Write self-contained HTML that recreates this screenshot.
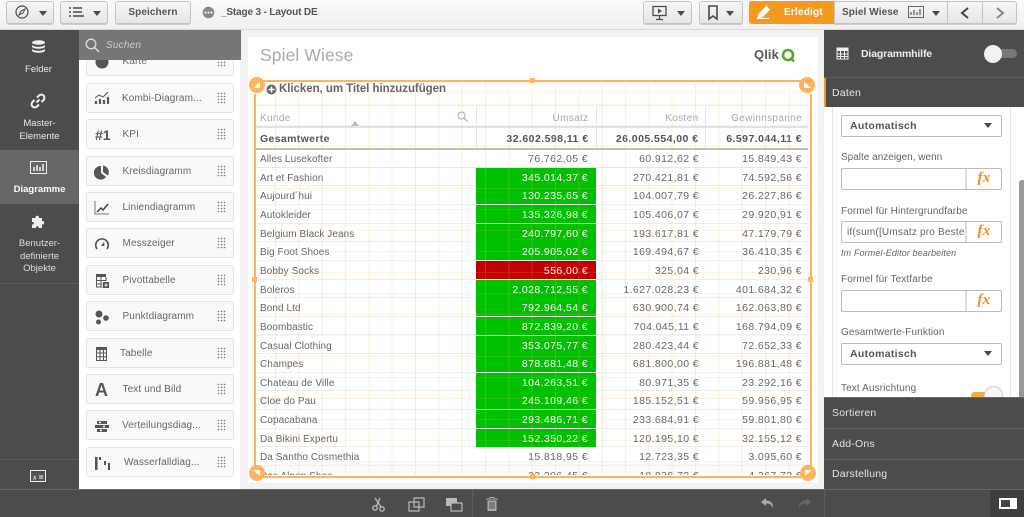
<!DOCTYPE html>
<html lang="de"><head><meta charset="utf-8"><title>Spiel Wiese</title>
<style>
html,body{margin:0;padding:0}
body{width:1024px;height:517px;position:relative;overflow:hidden;background:#f2f2f2;font-family:"Liberation Sans",sans-serif;color:#595959;font-size:10px}
div,span,u{box-sizing:border-box}
.a{position:absolute}
.btn{position:absolute;top:1px;height:23px;background:linear-gradient(#f6f6f6,#e6e6e6);border:1px solid #c4c4c4;border-radius:3px;box-shadow:0 1px 0 #ccc}
.tri{position:absolute;width:0;height:0;border-left:4px solid transparent;border-right:4px solid transparent;border-top:5px solid #4a4a4a}
.side{position:absolute;left:0;width:79px;text-align:center;color:#e8e8e8;font-size:9.5px;line-height:12.5px}
.card{position:absolute;left:86px;width:148px;height:30px;background:#f9f9f9;border:1px solid #e3e3e3;border-radius:3px;color:#666;font-size:10px;line-height:30px;letter-spacing:.12px;white-space:nowrap}
.card svg{position:absolute;left:7px;top:5px}
.card i{position:absolute;left:130px;top:8px;width:9px;height:12px;background:radial-gradient(circle,#808080 .65px,transparent .95px) 0 0/3px 3px}
.card span{position:absolute;top:0}
.hd{position:absolute;top:113px;font-size:10px;color:#a8a8a8;letter-spacing:.35px;text-align:right;white-space:nowrap}
.tot{position:absolute;top:133px;font-size:10.5px;font-weight:bold;color:#555;letter-spacing:.45px;text-align:right;white-space:nowrap}
.r{position:absolute;left:255px;width:553px;height:18.65px;border-bottom:1px solid #eee;font-size:10.5px;line-height:20.5px;color:#666;white-space:nowrap}
.r b{font-weight:normal;position:absolute;left:5px;letter-spacing:.08px;font-size:10px;line-height:21.5px}
.r u,.r s,.r em{text-decoration:none;font-style:normal;position:absolute;text-align:right;letter-spacing:.4px}
.r u{left:221px;width:120px;padding-right:8px;height:18px}
.r s{right:109px}
.r em{right:6px}
.g u{background:#00c000;color:#fff}
.rd u{background:#c00000;color:#fff}
.lb{position:absolute;left:841px;font-size:10px;color:#666;letter-spacing:.12px;white-space:nowrap}
.sel{position:absolute;left:841px;width:161px;height:22px;background:#fff;border:1px solid #bbb;border-radius:2px;font-size:10.5px;font-weight:bold;color:#555;line-height:20px;padding-left:8px;letter-spacing:.3px}
.inp{position:absolute;left:841px;width:161px;height:22px;background:#fff;border:1px solid #bbb;border-radius:2px;font-size:10px;color:#666;line-height:21px;padding-left:5px;letter-spacing:.2px;white-space:nowrap;overflow:hidden}
.inp i{position:absolute;right:0;top:0;width:34px;height:20px;background:#fff;border-left:2px solid #ddd;color:#f28c1e;font:italic bold 15px "Liberation Serif",serif;text-align:center;line-height:19px}
.acc{position:absolute;left:824px;width:200px;background:#4c4c4c;border-top:1px solid #666;color:#e4e4e4;font-size:10.5px;padding-left:8px;letter-spacing:.2px}
.hnd{position:absolute;width:16px;height:16px;border-radius:50%;background:#ffb35c}
.sq{position:absolute;width:5px;height:5px;background:#ffb35c}
</style></head><body>

<!-- top bar -->
<div class="a" style="left:0;top:0;width:1024px;height:30px;background:linear-gradient(#fafafa,#f0f0f0);border-bottom:1px solid #d8d8d8"></div>
<div class="btn" style="left:6px;width:48px"><svg class="a" style="left:7px;top:2px" width="16" height="16" viewBox="0 0 16 16"><circle cx="8" cy="8" r="6" fill="none" stroke="#4a4a4a" stroke-width="1.2"/><path d="M11 5 9 9 5 11 7 7z" fill="none" stroke="#4a4a4a"/></svg><div class="tri" style="left:32px;top:9px"></div></div>
<div class="btn" style="left:60px;width:48px"><svg class="a" style="left:8px;top:4px" width="15" height="12" viewBox="0 0 15 12"><path d="M0 2h2M4 2h9M0 6h2M4 6h9M0 10h2M4 10h11" stroke="#4a4a4a" stroke-width="1.5"/></svg><div class="tri" style="left:32px;top:9px"></div></div>
<div class="btn" style="left:115px;width:76px;text-align:center;font-weight:bold;font-size:10px;line-height:22px;color:#555;letter-spacing:.1px">Speichern</div>
<svg class="a" style="left:202px;top:6px" width="13" height="13"><circle cx="6.5" cy="6.5" r="5.8" fill="#888"/><circle cx="3.5" cy="6.5" r="1" fill="#fff"/><circle cx="6.5" cy="6.5" r="1" fill="#fff"/><circle cx="9.5" cy="6.5" r="1" fill="#fff"/></svg>
<div class="a" style="left:221px;top:7px;font-size:10px;font-weight:bold;color:#555;letter-spacing:-.15px;white-space:nowrap">_Stage 3 - Layout DE</div>

<div class="btn" style="left:643px;width:49px"><svg class="a" style="left:8px;top:3px" width="16" height="16" viewBox="0 0 16 16"><path d="M1 1.5h13v9H1zM7.500 11v3M4 14.500h7" fill="none" stroke="#4a4a4a" stroke-width="1.3"/><path d="M6 3.500 10 6 6 8.500z" fill="#4a4a4a"/></svg><div class="tri" style="left:33px;top:9px"></div></div>
<div class="btn" style="left:699px;width:44px"><svg class="a" style="left:7px;top:3px" width="12" height="16" viewBox="0 0 12 16"><path d="M2 1h8v13L6 11l-4 3z" fill="none" stroke="#4a4a4a" stroke-width="1.6"/></svg><div class="tri" style="left:26px;top:9px"></div></div>
<div class="a" style="left:749px;top:1px;width:85px;height:23px;background:#f7981f;border-radius:3px 0 0 3px;color:#fff;font-weight:bold;font-size:10px;line-height:23px;padding-left:35px;letter-spacing:.2px">Erledigt
<svg class="a" style="left:8px;top:3px" width="16" height="15" viewBox="0 0 16 15"><path d="M2 10 10 2l3 3-8 8-4 1zM0 14.500h12" fill="#fff" stroke="#fff"/><path d="M10 2l3 3" stroke="#f7981f"/></svg></div>
<div class="btn" style="left:834px;width:114px;border-radius:0;font-weight:bold;font-size:10px;line-height:22px;padding-left:7px;color:#555;letter-spacing:.1px">Spiel Wiese<svg class="a" style="left:73px;top:4px" width="16" height="13" viewBox="0 0 16 13"><path d="M.5 .5h15v11H.5z" fill="none" stroke="#666"/><path d="M3 9V6M6 9V4M9 9V6M12 9V3" stroke="#666" stroke-width="1.300"/></svg><div class="tri" style="left:97px;top:9px"></div></div>
<div class="btn" style="left:947px;width:36px;border-radius:0"><svg class="a" style="left:12px;top:5px" width="10" height="12"><path d="M8 1 2 6l6 5" fill="none" stroke="#444" stroke-width="2"/></svg></div>
<div class="btn" style="left:982px;width:35px;border-radius:0 3px 3px 0"><svg class="a" style="left:12px;top:5px" width="10" height="12"><path d="M2 1l6 5-6 5" fill="none" stroke="#888" stroke-width="2"/></svg></div>

<!-- left sidebar -->
<div class="a" style="left:0;top:30px;width:79px;height:459px;background:#4c4c4c"></div>
<div class="a" style="left:0;top:150px;width:79px;height:54px;background:#666"></div>
<div class="a" style="left:0;top:283px;width:79px;height:1px;background:#5c5c5c"></div>
<div class="a" style="left:0;top:459px;width:79px;height:1px;background:#5c5c5c"></div>
<svg class="a" style="left:31px;top:40px" width="15" height="14" viewBox="0 0 15 14"><ellipse cx="7.500" cy="2.500" rx="6.500" ry="2.300" fill="#eee"/><path d="M1 4.500c0 3 13 3 13 0v2c0 3-13 3-13 0zM1 8.500c0 3 13 3 13 0v2c0 3-13 3-13 0z" fill="#eee"/></svg>
<div class="side" style="top:64px;left:-1px">Felder</div>
<svg class="a" style="left:30px;top:93px" width="16" height="16" viewBox="0 0 16 16"><path d="M6.500 9.500l3-3M7 4.500l2-2a2.500 2.500 0 0 1 4.500 4.500l-2 2M9 11.500l-2 2A2.500 2.500 0 0 1 2.500 9l2-2" fill="none" stroke="#eee" stroke-width="2"/></svg>
<div class="side" style="top:118px">Master-<br>Elemente</div>
<svg class="a" style="left:30px;top:161px" width="17" height="13" viewBox="0 0 17 13"><path d="M.5 .5h16v12H.5z" fill="none" stroke="#eee"/><path d="M4 10V6M7 10V4M10 10V6M13 10V3" stroke="#eee" stroke-width="1.600"/></svg>
<div class="side" style="top:184px;font-weight:bold;color:#fff">Diagramme</div>
<svg class="a" style="left:31px;top:214px" width="15" height="15" viewBox="0 0 15 15"><path d="M1 4h3.500c-.5-3 4-3 3.500 0h3v3c3-.5 3 4 0 3.500V14H7.500c.5-2.500-3-2.500-2.500 0H1v-3.500c2.500.5 2.500-3 0-2.500z" fill="#eee"/></svg>
<div class="side" style="top:238px;color:#ddd">Benutzer-<br>definierte<br>Objekte</div>
<svg class="a" style="left:30px;top:470px" width="16" height="12" viewBox="0 0 16 12"><path d="M.5 .5h15v11H.5z" fill="none" stroke="#eee"/><path d="M1 3h14v8H1z" fill="#555"/><text x="3" y="9.500" font-size="7" font-style="italic" font-weight="bold" fill="#eee" font-family="Liberation Serif">x</text><path d="M9 6h4M9 8h4" stroke="#eee"/></svg>

<!-- assets panel -->
<div class="a" style="left:79px;top:30px;width:161px;height:459px;background:#fff"></div>
<div class="card" style="top:46px"><svg width="16" height="20" viewBox="0 0 16 20"><circle cx="8" cy="10" r="6.500" fill="#555"/></svg><span style="left:35.500px">Karte</span><i></i></div>
<div class="card" style="top:82.500px"><svg width="16" height="20" viewBox="0 0 16 20"><path d="M2 15v-3M6 15v-5M10 15v-4M14 15V8" stroke="#555" stroke-width="2.200"/><path d="M1 9l4-3 4 2 5-5" fill="none" stroke="#555"/></svg><span style="left:35px">Kombi-Diagram...</span><i></i></div>
<div class="card" style="top:119px"><span style="left:8px;font-size:14px;font-weight:bold;color:#555;letter-spacing:0">#1</span><span style="left:35.500px">KPI</span><i></i></div>
<div class="card" style="top:155.500px"><svg width="16" height="20" viewBox="0 0 16 20"><path d="M7 4v7l5 4a6.800 6.800 0 1 1-5-11zM9 3.500a6.800 6.800 0 0 1 5 10L9 10z" fill="#555"/></svg><span style="left:35.500px">Kreisdiagramm</span><i></i></div>
<div class="card" style="top:192px"><svg width="16" height="20" viewBox="0 0 16 20"><path d="M1 3v13h14" fill="none" stroke="#777"/><path d="M3 14l4-4 2 2 5-6" fill="none" stroke="#444" stroke-width="1.500"/></svg><span style="left:35.500px">Liniendiagramm</span><i></i></div>
<div class="card" style="top:228px"><svg width="16" height="20" viewBox="0 0 16 20"><path d="M3 15a6.300 6.300 0 1 1 10 0" fill="none" stroke="#555" stroke-width="1.600"/><path d="M7 12l3-4 .5 4z" fill="#555"/></svg><span style="left:35.500px">Messzeiger</span><i></i></div>
<div class="card" style="top:265px"><svg width="16" height="20" viewBox="0 0 16 20"><path d="M2 3h10v3H2z" fill="#555"/><path d="M2.500 6v10h6M7 6v10M2.500 9.500h9.500M2.500 13h6M12 6v4" fill="none" stroke="#555"/><path d="M9 11h6v6H9z" fill="#555"/><path d="M12 12.500v3M10.500 14h3" stroke="#fff"/></svg><span style="left:35.500px">Pivottabelle</span><i></i></div>
<div class="card" style="top:301px"><svg width="16" height="20" viewBox="0 0 16 20"><circle cx="5" cy="7" r="3.500" fill="#555"/><circle cx="12" cy="11" r="2.800" fill="#555"/><circle cx="4.500" cy="15" r="2.500" fill="#555"/></svg><span style="left:35.500px">Punktdiagramm</span><i></i></div>
<div class="card" style="top:337.500px"><svg width="16" height="20" viewBox="0 0 16 20"><path d="M2 3h11v3H2z" fill="#555"/><path d="M2.500 5v11.500h10V5M2.500 9h10M2.500 12.700h10M6 6v10M9.500 6v10" fill="none" stroke="#555"/></svg><span style="left:33px">Tabelle</span><i></i></div>
<div class="card" style="top:374px"><span style="left:8px;font-size:18px;font-weight:bold;color:#555;letter-spacing:0">A</span><span style="left:35.500px">Text und Bild</span><i></i></div>
<div class="card" style="top:410px"><svg width="16" height="20" viewBox="0 0 16 20"><path d="M3 5h10v3H3zM1 9h14v3H1zM3 13h10v3H3z" fill="#555"/><circle cx="6" cy="6.500" r="1" fill="#fff"/><circle cx="10" cy="10.500" r="1" fill="#fff"/><circle cx="7" cy="14.500" r="1" fill="#fff"/></svg><span style="left:35px">Verteilungsdiag...</span><i></i></div>
<div class="card" style="top:446.500px"><svg width="18" height="20" viewBox="0 0 18 20"><path d="M1 4h2.500v13H1zM5 4h2v3H5zM10 8h2v4h-2zM14 10h2v7h-2z" fill="#555"/></svg><span style="left:37px">Wasserfalldiag...</span><i></i></div>
<div class="a" style="left:79px;top:30px;width:162px;height:30px;background:#767676"></div>
<svg class="a" style="left:85px;top:38px" width="15" height="15" viewBox="0 0 15 15"><circle cx="6" cy="6" r="4.800" fill="none" stroke="#ddd" stroke-width="1.300"/><path d="M9.500 9.500 14 14" stroke="#ddd" stroke-width="1.500"/></svg>
<div class="a" style="left:106px;top:40px;font-size:10px;font-style:italic;color:#ccc;letter-spacing:.2px">Suchen</div>

<!-- sheet -->
<div class="a" style="left:247.500px;top:36.500px;width:570px;height:446.500px;background:#fff"></div>
<div class="a" style="left:260px;top:45px;font-size:17.500px;color:#aaa;letter-spacing:.1px;white-space:nowrap">Spiel Wiese</div>
<div class="a" style="left:754px;top:47px;font-size:13px;font-weight:bold;color:#595959;letter-spacing:.1px">Qlik</div>
<svg class="a" style="left:781px;top:48px" width="15" height="15" viewBox="0 0 15 15"><circle cx="7" cy="7" r="5" fill="none" stroke="#52a62e" stroke-width="2.600"/><path d="M9.500 9.500l3.500 4" stroke="#52a62e" stroke-width="2.600"/></svg>

<!-- title -->
<svg class="a" style="left:266px;top:84px" width="11" height="11"><circle cx="5.500" cy="5.500" r="5" fill="#666"/><path d="M5.500 2.500v6M2.500 5.500h6" stroke="#fff" stroke-width="1.500"/></svg>
<div class="a" style="left:279px;top:83px;font-size:11.500px;font-weight:bold;color:#666;letter-spacing:-.05px;white-space:nowrap">Klicken, um Titel hinzuzufügen</div>

<!-- table -->
<div class="a" style="left:255px;top:105px;width:553px;height:1px;background:#eee"></div>
<div class="a" style="left:476px;top:105px;width:1px;height:45px;background:#e8e8e8"></div>
<div class="a" style="left:596px;top:105px;width:1px;height:45px;background:#e8e8e8"></div>
<div class="a" style="left:705px;top:105px;width:1px;height:45px;background:#e8e8e8"></div>
<div class="hd" style="left:260px">Kunde</div>
<svg class="a" style="left:457px;top:111px" width="11" height="11" viewBox="0 0 11 11"><circle cx="4.500" cy="4.500" r="3.500" fill="none" stroke="#aaa"/><path d="M7 7l3.500 3.500" stroke="#aaa" stroke-width="1.200"/></svg>
<div class="a" style="left:351px;top:121px;width:0;height:0;border-left:4px solid transparent;border-right:4px solid transparent;border-bottom:5px solid #bbb"></div>
<div class="hd" style="right:435.500px">Umsatz</div>
<div class="hd" style="right:325.500px">Kosten</div>
<div class="hd" style="right:222px">Gewinnspanne</div>
<div class="a" style="left:255px;top:126px;width:553px;height:2px;background:#e2e2e2"></div>
<div class="tot" style="left:260px;letter-spacing:.35px">Gesamtwerte</div>
<div class="tot" style="right:435.500px">32.602.598,11 €</div>
<div class="tot" style="right:325.500px">26.005.554,00 €</div>
<div class="tot" style="right:222px">6.597.044,11 €</div>
<div class="a" style="left:255px;top:148px;width:553px;height:2px;background:#bdbdbd"></div>

<div class="a" style="left:0;top:0;width:1024px;height:475px;overflow:hidden">
<div class="r" style="top:149px"><b>Alles Lusekofter</b><u>76.762,05 €</u><s>60.912,62 €</s><em>15.849,43 €</em></div>
<div class="r g" style="top:167.650px"><b>Art et Fashion</b><u>345.014,37 €</u><s>270.421,81 €</s><em>74.592,56 €</em></div>
<div class="r g" style="top:186.300px"><b>Aujourd´hui</b><u>130.235,65 €</u><s>104.007,79 €</s><em>26.227,86 €</em></div>
<div class="r g" style="top:204.950px"><b>Autokleider</b><u>135.326,98 €</u><s>105.406,07 €</s><em>29.920,91 €</em></div>
<div class="r g" style="top:223.600px"><b>Belgium Black Jeans</b><u>240.797,60 €</u><s>193.617,81 €</s><em>47.179,79 €</em></div>
<div class="r g" style="top:242.250px"><b>Big Foot Shoes</b><u>205.905,02 €</u><s>169.494,67 €</s><em>36.410,35 €</em></div>
<div class="r rd" style="top:260.900px"><b>Bobby Socks</b><u>556,00 €</u><s>325,04 €</s><em>230,96 €</em></div>
<div class="r g" style="top:279.550px"><b>Boleros</b><u>2.028.712,55 €</u><s>1.627.028,23 €</s><em>401.684,32 €</em></div>
<div class="r g" style="top:298.200px"><b>Bond Ltd</b><u>792.964,54 €</u><s>630.900,74 €</s><em>162.063,80 €</em></div>
<div class="r g" style="top:316.850px"><b>Boombastic</b><u>872.839,20 €</u><s>704.045,11 €</s><em>168.794,09 €</em></div>
<div class="r g" style="top:335.500px"><b>Casual Clothing</b><u>353.075,77 €</u><s>280.423,44 €</s><em>72.652,33 €</em></div>
<div class="r g" style="top:354.150px"><b>Champes</b><u>878.681,48 €</u><s>681.800,00 €</s><em>196.881,48 €</em></div>
<div class="r g" style="top:372.800px"><b>Chateau de Ville</b><u>104.263,51 €</u><s>80.971,35 €</s><em>23.292,16 €</em></div>
<div class="r g" style="top:391.450px"><b>Cloe do Pau</b><u>245.109,46 €</u><s>185.152,51 €</s><em>59.956,95 €</em></div>
<div class="r g" style="top:410.100px"><b>Copacabana</b><u>293.486,71 €</u><s>233.684,91 €</s><em>59.801,80 €</em></div>
<div class="r g" style="top:428.750px"><b>Da Bikini Expertu</b><u>152.350,22 €</u><s>120.195,10 €</s><em>32.155,12 €</em></div>
<div class="r" style="top:447.400px"><b>Da Santho Cosmethia</b><u>15.818,95 €</u><s>12.723,35 €</s><em>3.095,60 €</em></div>
<div class="r" style="top:466.050px"><b>Das Alpen Shoe</b><u>23.206,45 €</u><s>18.838,72 €</s><em>4.367,73 €</em></div>
</div>

<!-- grid overlay -->
<div class="a" style="left:254px;top:84px;width:556px;height:391px;pointer-events:none;background-image:repeating-linear-gradient(90deg,transparent 0 21px,rgba(255,179,92,.24) 21px 22px,transparent 22px 23.330px),repeating-linear-gradient(180deg,transparent 0 20px,rgba(255,179,92,.16) 20px 21px,transparent 21px 20.750px)"></div>

<!-- frame -->
<div class="a" style="left:263px;top:79.500px;width:538px;height:2px;background:#ffb35c"></div>
<div class="a" style="left:263px;top:475.500px;width:538px;height:2px;background:#ffb35c"></div>
<div class="a" style="left:253.500px;top:94px;width:2px;height:372px;background:#ffb35c"></div>
<div class="a" style="left:809.500px;top:94px;width:2px;height:372px;background:#ffb35c"></div>
<div class="hnd" style="left:249px;top:76.500px"><svg class="a" style="left:3px;top:4px" width="9" height="8"><path d="M8 1v6H1z" fill="#fff"/></svg></div>
<div class="hnd" style="left:799px;top:76.500px"><svg class="a" style="left:4px;top:4px" width="9" height="8"><path d="M1 1v6h7z" fill="#fff"/></svg></div>
<div class="hnd" style="left:249px;top:465px"><svg class="a" style="left:3px;top:4px" width="9" height="8"><path d="M1 1h7v6z" fill="#fff"/></svg></div>
<div class="hnd" style="left:800px;top:465px"><svg class="a" style="left:4px;top:4px" width="9" height="8"><path d="M1 1h7L1 7z" fill="#fff"/></svg></div>
<div class="sq" style="left:530px;top:78px"></div>
<div class="sq" style="left:530px;top:473.500px"></div>
<div class="sq" style="left:251.500px;top:277px"></div>
<div class="sq" style="left:808px;top:277px"></div>

<!-- right panel -->
<div class="a" style="left:824px;top:30px;width:200px;height:77px;background:#4c4c4c"></div>
<div class="a" style="left:824px;top:77px;width:200px;height:1px;background:#5e5e5e"></div>
<div class="a" style="left:824px;top:78px;width:2px;height:29px;background:#f7981f"></div>
<svg class="a" style="left:836px;top:47px" width="13" height="13" viewBox="0 0 13 13"><path d="M1 1h11v3H1z" fill="#eee"/><path d="M1 1h11v11H1zM1 7h11M1 9.500h11M4.500 4v8M8.500 4v8" fill="none" stroke="#eee"/></svg>
<div class="a" style="left:861px;top:48px;font-size:10.500px;font-weight:bold;color:#eee;letter-spacing:-.15px;white-space:nowrap">Diagrammhilfe</div>
<div class="a" style="left:990px;top:49px;width:27px;height:9px;background:#777;border-radius:5px"></div>
<div class="a" style="left:983.500px;top:45px;width:18px;height:18px;background:#f2f2f2;border-radius:50%"></div>
<div class="a" style="left:832px;top:87px;font-size:10.500px;color:#e8e8e8;letter-spacing:.2px">Daten</div>

<div class="a" style="left:824px;top:107px;width:200px;height:290px;background:#fff"></div>
<div class="a" style="left:832px;top:107px;width:1px;height:290px;background:#e6e6e6"></div>
<div class="a" style="left:1010px;top:107px;width:1px;height:290px;background:#e6e6e6"></div>
<div class="a" style="left:1019px;top:180px;width:5px;height:217px;background:#999;border-radius:3px 0 0 0"></div>

<div class="sel" style="top:115px">Automatisch<div class="tri" style="right:9px;top:7px;left:auto"></div></div>
<div class="lb" style="top:152px;letter-spacing:0">Spalte anzeigen, wenn</div>
<div class="inp" style="top:168px"><i>fx</i></div>
<div class="lb" style="top:206px">Formel für Hintergrundfarbe</div>
<div class="inp" style="top:221px">if(sum([Umsatz pro Beste<i>fx</i></div>
<div class="lb" style="top:248px;font-size:9px;font-style:italic">Im Formel-Editor bearbeiten</div>
<div class="lb" style="top:274px">Formel für Textfarbe</div>
<div class="inp" style="top:290px"><i>fx</i></div>
<div class="lb" style="top:327px">Gesamtwerte-Funktion</div>
<div class="sel" style="top:343px">Automatisch<div class="tri" style="right:9px;top:7px;left:auto"></div></div>
<div class="lb" style="top:383px">Text Ausrichtung</div>
<div class="a" style="left:971px;top:392px;width:30px;height:8px;background:#f7a83e;border-radius:4px 0 0 0"></div>
<div class="a" style="left:984px;top:386px;width:19px;height:19px;background:#f6f6f6;border:1px solid #ccc;border-radius:50%"></div>

<div class="acc" style="top:397px;height:32px;line-height:31px">Sortieren</div>
<div class="acc" style="top:428px;height:31px;line-height:30px">Add-Ons</div>
<div class="acc" style="top:459px;height:30px;line-height:29px">Darstellung</div>

<!-- bottom bar -->
<div class="a" style="left:0;top:489px;width:1024px;height:28px;background:#4c4c4c;border-top:1px solid #666"></div>
<div class="a" style="left:472px;top:490px;width:1px;height:27px;background:#5c5c5c"></div>
<div class="a" style="left:824px;top:490px;width:1px;height:27px;background:#5c5c5c"></div>
<div class="a" style="left:990px;top:490px;width:34px;height:27px;background:#3f3f3f"></div>
<svg class="a" style="left:371px;top:497px" width="15" height="15" viewBox="0 0 15 15"><path d="M9 1 5.500 9M4 1l6 9" fill="none" stroke="#bbb" stroke-width="1.300"/><circle cx="4" cy="11" r="2.200" fill="none" stroke="#bbb" stroke-width="1.300"/><circle cx="11" cy="12" r="2.200" fill="none" stroke="#bbb" stroke-width="1.300"/></svg>
<svg class="a" style="left:408px;top:497px" width="18" height="15" viewBox="0 0 18 15"><path d="M6 1h10v9H6zM1 5h10v9H1z" fill="#4c4c4c" stroke="#bbb" stroke-width="1.200"/></svg>
<svg class="a" style="left:445px;top:497px" width="18" height="15" viewBox="0 0 18 15"><path d="M1 1h11v8H1z" fill="#bbb"/><path d="M6 6h11v8H6z" fill="#4c4c4c" stroke="#bbb" stroke-width="1.200"/></svg>
<svg class="a" style="left:486px;top:497px" width="12" height="15" viewBox="0 0 12 15"><path d="M0 2h12M4 1.500V.5h4v1" stroke="#aaa"/><path d="M1.500 3.500h9V14h-9z" fill="#aaa"/><path d="M4 5v7M6 5v7M8 5v7" stroke="#4c4c4c"/></svg>
<svg class="a" style="left:760px;top:497px" width="15" height="13" viewBox="0 0 15 13"><path d="M6 1 1 5l5 4V6.500c4 0 6 1.500 7 5 .5-5-2-8-7-8z" fill="#aaa"/></svg>
<svg class="a" style="left:797px;top:497px" width="15" height="13" viewBox="0 0 15 13"><path d="M9 1l5 4-5 4V6.500c-4 0-6 1.500-7 5-.5-5 2-8 7-8z" fill="#666"/></svg>
<svg class="a" style="left:999px;top:498px" width="18" height="11" viewBox="0 0 18 11"><path d="M0 0h18v11H0z" fill="#fff"/><path d="M2 2h9v7H2z" fill="#444"/></svg>
</body></html>
